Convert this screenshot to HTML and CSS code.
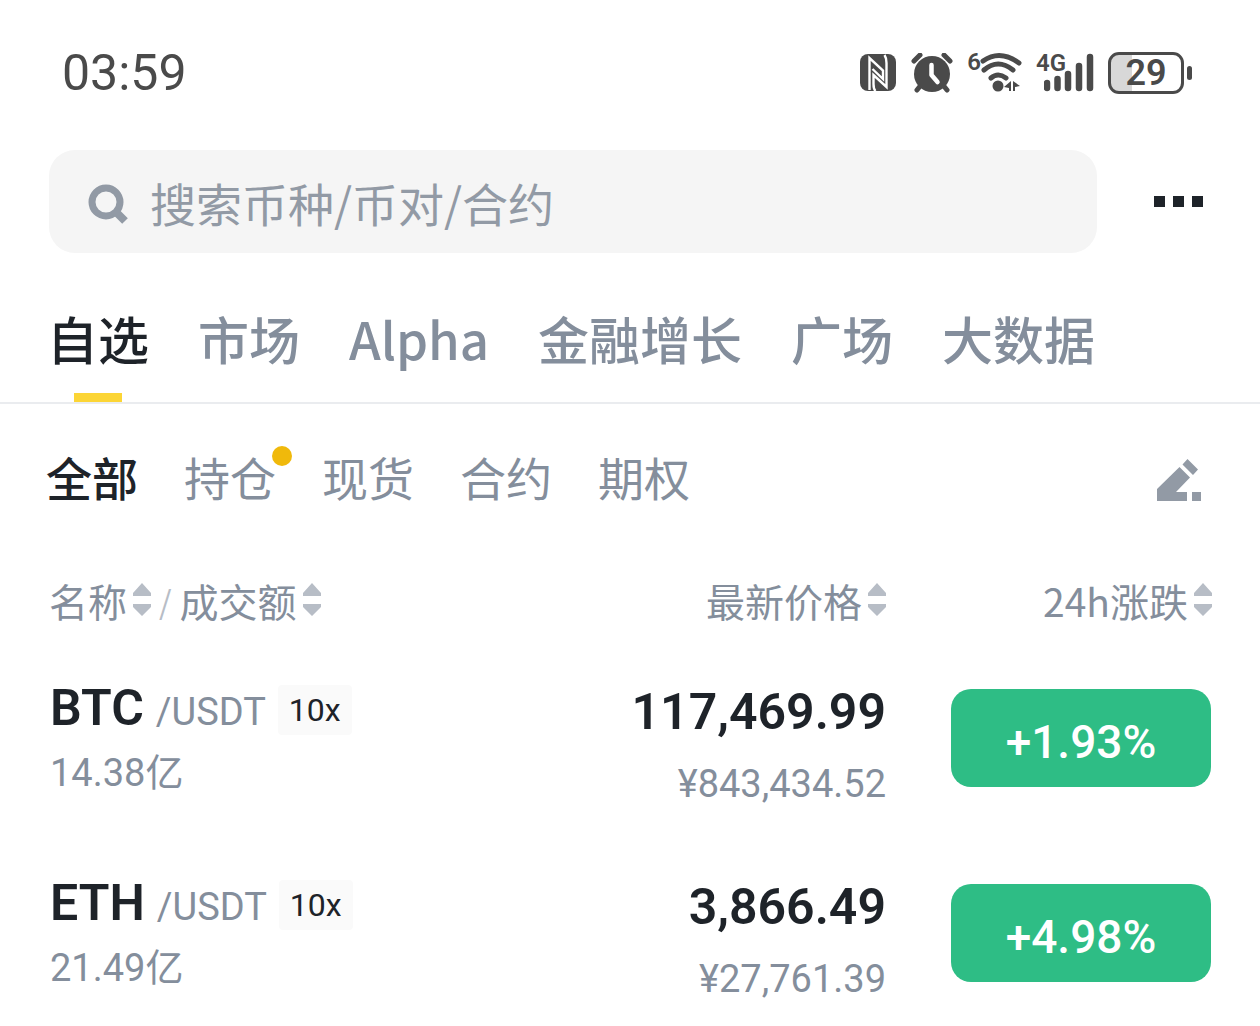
FILE: index.html
```html
<!DOCTYPE html>
<html lang="zh-CN">
<head>
<meta charset="utf-8">
<meta name="viewport" content="width=device-width, initial-scale=1">
<title>自选行情</title>
<link rel="stylesheet" href="styles.css">
</head>
<body>
<header class="status">
  <time class="clock">03:59</time>
  <div class="status-icons">
    <svg width="38" height="40" viewBox="0 0 38 40" aria-label="NFC">
      <rect x="1" y="1" width="36" height="37" rx="8" fill="#4a4a4a"/>
      <path d="M10.500 37V5L24 17.500V26L13.500 16M25.500 2q2 3 2 8v24L14.500 22v9q0 5 2 7" fill="none" stroke="#fff" stroke-width="2.400"/>
    </svg>
    <svg width="42" height="40" viewBox="0 0 42 40" aria-label="闹钟">
      <g fill="none" stroke="#4a4a4a" stroke-width="5" stroke-linecap="round"><path d="M3 8l6-6M39 8l-6-6M10 32l-4 5M32 32l4 5"/></g>
      <circle cx="21" cy="21" r="18" fill="#4a4a4a"/>
      <path d="M20.500 12v10l6 7" fill="none" stroke="#fff" stroke-width="4.500" stroke-linecap="round" stroke-linejoin="round"/>
    </svg>
    <div class="signal">
      <span class="wifi-gen">6</span>
      <svg width="42" height="42" viewBox="0 0 42 42" aria-label="无线网络">
        <g fill="none" stroke="#4a4a4a" stroke-width="5" stroke-linecap="round"><path d="M3 9Q20-3 39 11M4 18Q18 6 33 18M11 26Q18 20 26 26"/></g>
        <circle cx="18" cy="34" r="5.500" fill="#4a4a4a"/>
        <path d="M31 29v10h-2v-3l-5-1zM33 29l7 5-5 1v4h-2z" fill="#4a4a4a"/>
      </svg>
    </div>
    <div class="signal">
      <span class="net-gen">4G</span>
      <svg width="50" height="40" viewBox="0 0 50 40" aria-label="移动信号">
        <path d="M3 30v5M13.500 26v9M24 21v14M35 13v22M46 4v31" stroke="#4a4a4a" stroke-width="6.500" stroke-linecap="round"/>
      </svg>
    </div>
    <div class="battery"><span class="battery-body">29</span><span class="battery-tip"></span></div>
  </div>
</header>

<form class="search-row" role="search">
  <label class="search">
    <svg width="42" height="44" viewBox="0 0 42 44" aria-hidden="true">
      <circle cx="19" cy="22" r="14" fill="none" stroke="#929aa5" stroke-width="7"/>
      <path d="M28 31l10 10" stroke="#929aa5" stroke-width="8"/>
    </svg>
    <input type="search" class="search-input" placeholder="搜索币种/币对/合约" aria-label="搜索">
  </label>
  <button type="button" class="more" aria-label="更多">
    <svg width="50" height="12" viewBox="0 0 50 12"><path d="M0 0h11v11H0zM19 0h11v11H19zM38 0h11v11H38z" fill="#1e2329"/></svg>
  </button>
</form>

<nav class="tabs">
  <a href="#" class="tab active">自选</a>
  <a href="#" class="tab">市场</a>
  <a href="#" class="tab">Alpha</a>
  <a href="#" class="tab">金融增长</a>
  <a href="#" class="tab">广场</a>
  <a href="#" class="tab">大数据</a>
</nav>

<main>
  <div class="filters">
    <a href="#" class="filter active">全部</a>
    <a href="#" class="filter has-dot">持仓</a>
    <a href="#" class="filter">现货</a>
    <a href="#" class="filter">合约</a>
    <a href="#" class="filter">期权</a>
    <button type="button" class="edit" aria-label="编辑">
      <svg width="46" height="44" viewBox="0 0 46 44"><path d="M1 43V31L23.500 9 34 19.500 20 34h11v9zM36 34h9v9h-9zM26.500 6.500l5-5.500L42 11.500 37 17z" fill="#929aa5"/></svg>
    </button>
  </div>

  <table class="market">
    <thead>
      <tr>
        <th scope="col" class="name-col">
          <div class="sorts">
            <button type="button" class="sort">名称<svg width="18" height="34" viewBox="0 0 18 34"><path d="M0 13V10L9 0l9 10v3zM0 21h18v3L9 33 0 24z" fill="#b7bdc6"/></svg></button>
            <span class="slash">/</span>
            <button type="button" class="sort">成交额<svg width="18" height="34" viewBox="0 0 18 34"><path d="M0 13V10L9 0l9 10v3zM0 21h18v3L9 33 0 24z" fill="#b7bdc6"/></svg></button>
          </div>
        </th>
        <th scope="col" class="price-col">
          <div class="sorts end">
            <button type="button" class="sort">最新价格<svg width="18" height="34" viewBox="0 0 18 34"><path d="M0 13V10L9 0l9 10v3zM0 21h18v3L9 33 0 24z" fill="#b7bdc6"/></svg></button>
          </div>
        </th>
        <th scope="col" class="change-col">
          <div class="sorts end">
            <button type="button" class="sort">24h涨跌<svg width="18" height="34" viewBox="0 0 18 34"><path d="M0 13V10L9 0l9 10v3zM0 21h18v3L9 33 0 24z" fill="#b7bdc6"/></svg></button>
          </div>
        </th>
      </tr>
    </thead>
    <tbody>
      <tr>
        <td>
          <div class="pair"><span class="base">BTC</span><span class="quote">/USDT</span><span class="lever">10x</span></div>
          <div class="volume">14.38亿</div>
        </td>
        <td class="price-cell">
          <div class="price">117,469.99</div>
          <div class="fiat">¥843,434.52</div>
        </td>
        <td class="change-cell"><button type="button" class="change">+1.93%</button></td>
      </tr>
      <tr>
        <td>
          <div class="pair"><span class="base">ETH</span><span class="quote">/USDT</span><span class="lever">10x</span></div>
          <div class="volume">21.49亿</div>
        </td>
        <td class="price-cell">
          <div class="price">3,866.49</div>
          <div class="fiat">¥27,761.39</div>
        </td>
        <td class="change-cell"><button type="button" class="change">+4.98%</button></td>
      </tr>
    </tbody>
  </table>
</main>
</body>
</html>
```
FILE: styles.css
```css
* { box-sizing: border-box; }
body {
  margin: 0;
  background: #fff;
  color: #1e2329;
  font-family: Roboto, "Noto Sans CJK SC", sans-serif;
}
a { color: inherit; text-decoration: none; }
button {
  padding: 0;
  border: 0;
  background: none;
  color: inherit;
  font: inherit;
}
svg { display: block; flex: none; }

.status {
  display: flex;
  justify-content: space-between;
  align-items: center;
  height: 150px;
  padding: 0 68px 4px 62px;
  color: #4a4a4a;
}
.clock { font-size: 50px; line-height: 60px; }
.status-icons { display: flex; align-items: center; gap: 14px; }
.signal { display: flex; align-items: flex-start; }
.wifi-gen, .net-gen { font-size: 24px; line-height: 20px; font-weight: 600; }
.wifi-gen { margin-right: -1px; }
.net-gen { margin-right: -22px; }
.battery { display: flex; align-items: center; gap: 3px; }
.battery-body {
  width: 76px;
  height: 42px;
  border: 3px solid #4a4a4a;
  border-radius: 11px;
  background: linear-gradient(90deg, #d8d8d8 30%, #fff 30%);
  font-size: 36px;
  line-height: 37px;
  font-weight: 600;
  text-align: center;
}
.battery-tip { width: 5px; height: 14px; border-radius: 3px; background: #4a4a4a; }

.search-row { display: flex; align-items: center; padding: 0 56px 0 49px; }
.search {
  display: flex;
  flex: 1;
  align-items: center;
  gap: 21px;
  height: 103px;
  padding: 0 38px;
  border-radius: 26px;
  background: #f5f5f5;
}
.search-input {
  flex: 1;
  min-width: 0;
  height: 68px;
  padding: 0;
  border: 0;
  outline: 0;
  background: none;
  font: 400 46px/68px "Noto Sans CJK SC", sans-serif;
}
.search-input::placeholder { color: #929aa5; opacity: 1; }
.more { margin-left: 57px; }

.tabs {
  display: flex;
  gap: 49px;
  padding: 48px 47px 0;
  border-bottom: 2px solid #eaecef;
  color: #848e9c;
  font: 500 51px/74px "Noto Sans CJK SC", sans-serif;
}
.tab { display: flex; flex-direction: column; align-items: center; height: 101px; white-space: nowrap; }
.tab.active, .filter.active { color: #1e2329; }
.tab.active::after { content: ""; width: 48px; height: 9px; margin-top: auto; background: #fcd535; }

.filters {
  display: flex;
  align-items: center;
  gap: 46px;
  padding: 38px 58px 0 46px;
  color: #848e9c;
  font: 400 46px/68px "Noto Sans CJK SC", sans-serif;
}
.filter { position: relative; white-space: nowrap; }
.filter.active { font-weight: 500; }
.has-dot::after {
  content: "";
  position: absolute;
  top: 4px;
  right: -16px;
  width: 20px;
  height: 20px;
  border-radius: 50%;
  background: #f0b90b;
}
.edit { margin: 8px 0 0 auto; }

.market { width: 100%; border-collapse: collapse; table-layout: fixed; }
th, td { padding: 0; vertical-align: top; }
th { padding-top: 59px; height: 160px; color: #848e9c; font: 400 39px/62px "Noto Sans CJK SC", sans-serif; }
.name-col { width: 40%; padding-left: 49px; }
.change-col { width: 374px; padding-right: 48px; }
.sorts { display: flex; align-items: center; gap: 8px; }
.sorts.end { justify-content: flex-end; }
.sort { display: flex; align-items: center; gap: 6px; white-space: nowrap; }
.slash { color: #b7bdc6; font-size: 32px; }

td { height: 195px; padding-top: 14px; }
td:first-child { padding-left: 50px; }
.pair { display: flex; align-items: baseline; height: 52px; line-height: 48px; white-space: nowrap; }
.base { font-size: 50px; font-weight: 600; }
.quote { margin-left: 12px; color: #848e9c; font-size: 38px; }
.lever {
  align-self: center;
  margin-left: 12px;
  padding: 0 11px;
  border-radius: 4px;
  background: #fafafa;
  font-size: 32px;
  line-height: 50px;
}
.volume { margin-top: 14px; color: #848e9c; font-size: 38px; line-height: 46px; }
.price-cell { text-align: right; }
.price { font-size: 50px; line-height: 56px; font-weight: 600; }
.fiat { margin-top: 21px; color: #848e9c; font-size: 38px; line-height: 46px; }
.change-cell { padding-top: 19px; padding-right: 49px; text-align: right; }
.change {
  width: 260px;
  height: 98px;
  padding-top: 8px;
  border-radius: 20px;
  background: #2ebd85;
  color: #fff;
  font-size: 46px;
  line-height: 54px;
  font-weight: 500;
}
```
